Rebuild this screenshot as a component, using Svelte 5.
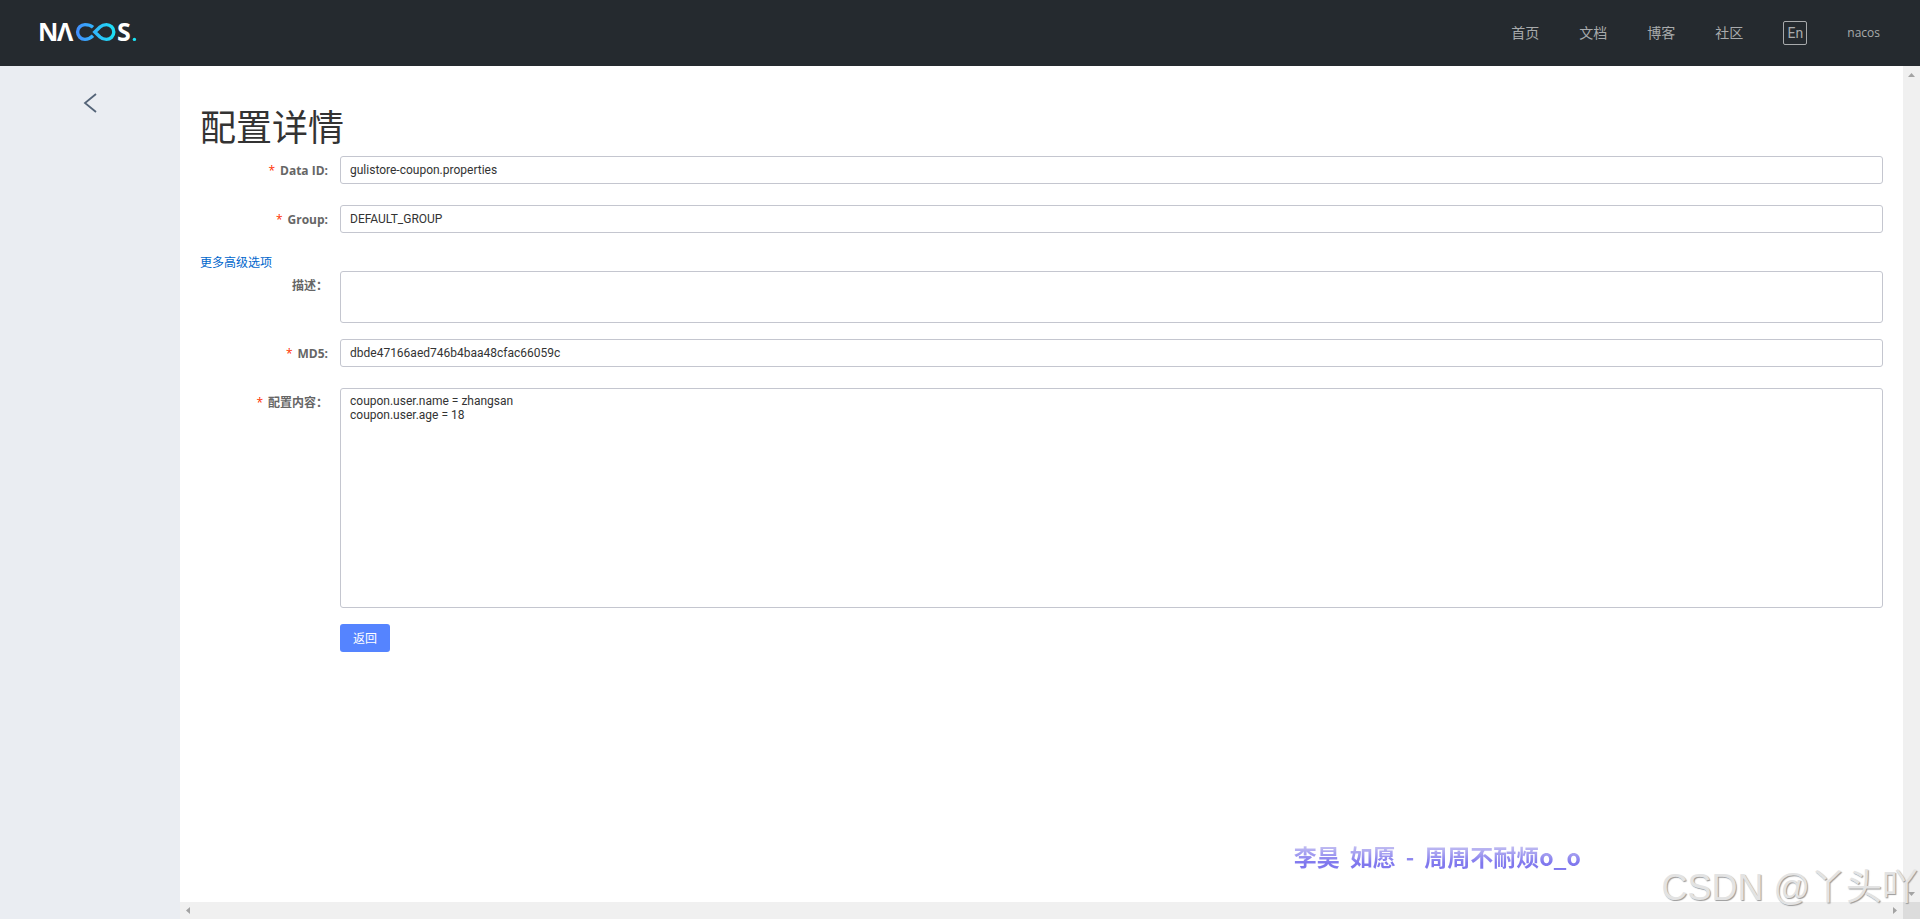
<script lang="ts">
	type Field = {
		id: string;
		label: string;
		value: string;
		required: boolean;
	};

	const links = ['首页', '文档', '博客', '社区'];

	let dataId: Field = {
		id: 'dataId',
		label: 'Data ID:',
		value: 'gulistore-coupon.properties',
		required: true
	};
	let group: Field = { id: 'group', label: 'Group:', value: 'DEFAULT_GROUP', required: true };
	let md5: Field = {
		id: 'md5',
		label: 'MD5:',
		value: 'dbde47166aed746b4baa48cfac66059c',
		required: true
	};
	let description = '';
	let content = 'coupon.user.name = zhangsan\ncoupon.user.age = 18';
	const lyric = ['李昊', '如愿', '-', '周周不耐烦o_o'];
</script>

<div class="page">
	<header>
		<a class="logo" href="#home" aria-label="Nacos">
			<svg width="104" height="40" viewBox="-4 -9 104 40">
				<defs>
					<linearGradient id="loop" gradientUnits="userSpaceOnUse" x1="36" y1="0" x2="76" y2="0">
						<stop offset="0" stop-color="#438eff" />
						<stop offset="1" stop-color="#1be3f5" />
					</linearGradient>
				</defs>
				<text x="-2" y="19">N</text>
				<text x="17" y="19">Λ</text>
				<g fill="none" stroke="url(#loop)" stroke-width="3.4">
					<path d="M53 5.2C50 2.6 47.5 2.6 45 2.6A7.4 7.4 0 0 0 45 17.4C48.5 17.4 50.5 16.2 53 13.8" />
					<path d="M54.8 10L60 5C62 3.2 64 2.6 66.4 2.6A7.4 7.4 0 0 1 66.4 17.4C64 17.4 62 16.8 60 15Z" />
				</g>
				<text x="77" y="19">S</text>
				<circle cx="94.4" cy="17.4" r="1.7" fill="#1be3f5" />
			</svg>
		</a>
		<nav>
			{#each links as link}
				<a href="#{link}">{link}</a>
			{/each}
			<button class="lang" type="button">En</button>
			<a class="user" href="#user">nacos</a>
		</nav>
	</header>

	<div class="body">
		<aside>
			<button class="back" type="button" aria-label="Back">
				<svg width="14" height="20" viewBox="0 0 14 20">
					<path d="M13 1L2 10L13 19" fill="none" stroke="#546478" stroke-width="1.8" />
				</svg>
			</button>
		</aside>

		<div class="viewport">
			<main>
				<h1>配置详情</h1>
				<form on:submit|preventDefault>
					{#each [dataId, group] as field}
						<div class="row">
							<label for={field.id} class:required={field.required}>{field.label}</label>
							<input type="text" id={field.id} value={field.value} readonly />
						</div>
					{/each}

					<a class="more" href="#more">更多高级选项</a>

					<div class="row area">
						<label for="description">描述：</label>
						<textarea id="description" bind:value={description} readonly></textarea>
					</div>

					<div class="row">
						<label for={md5.id} class:required={md5.required}>{md5.label}</label>
						<input type="text" id={md5.id} value={md5.value} readonly />
					</div>

					<div class="row area">
						<label for="content" class="required">配置内容：</label>
						<textarea id="content" class="content" bind:value={content} readonly></textarea>
					</div>

					<button class="primary" type="submit">返回</button>
				</form>
			</main>
			<div class="bar vertical">
				<svg width="17" height="17"><path d="M5 11L8.5 7L12 11Z" /></svg>
				<svg width="17" height="17"><path d="M5 7L8.5 11L12 7Z" /></svg>
			</div>
			<div class="bar">
				<svg width="17" height="17"><path d="M10 5L6 8.5L10 12Z" /></svg>
				<svg width="17" height="17"><path d="M7 5L11 8.5L7 12Z" /></svg>
			</div>
			<div class="corner"></div>
		</div>
	</div>

	<div class="lyric">
		{#each lyric as part}
			<span>{part}</span>
		{/each}
	</div>
	<div class="watermark">CSDN @丫头吖</div>
</div>

<style>
	:global(body) {
		font-family: 'Open Sans', 'Noto Sans CJK SC', sans-serif;
		font-size: 12px;
		color: #333;
	}

	.page {
		position: relative;
		display: flex;
		flex-direction: column;
		height: 100vh;
		overflow: hidden;
	}

	a {
		text-decoration: none;
	}

	button,
	input,
	textarea {
		box-sizing: border-box;
		font-family: inherit;
		font-size: 12px;
	}

	header {
		display: flex;
		align-items: center;
		justify-content: space-between;
		flex: none;
		height: 66px;
		padding: 0 40px 0 36px;
		box-sizing: border-box;
		background: #252a2f;
	}

	.logo svg {
		display: block;
	}

	.logo text {
		font-family: 'Open Sans', sans-serif;
		font-size: 25px;
		font-weight: 700;
		fill: #fff;
	}

	nav {
		display: flex;
		align-items: center;
		gap: 40px;
	}

	nav a {
		font-size: 14px;
		line-height: 18px;
		color: #a8aaac;
	}

	nav .user {
		font-size: 12px;
		font-weight: 500;
	}

	.lang {
		width: 24px;
		height: 24px;
		padding: 0;
		border: 1px solid #a8aaac;
		border-radius: 2px;
		background: none;
		color: #a8aaac;
		font-family: 'Roboto', sans-serif;
		font-size: 14px;
		line-height: 20px;
	}

	.body {
		display: flex;
		flex: 1;
		min-height: 0;
	}

	aside {
		flex: none;
		width: 180px;
		padding-top: 27px;
		box-sizing: border-box;
		background: #eaedf2;
		text-align: center;
	}

	.back {
		padding: 0;
		border: none;
		background: none;
	}

	.viewport {
		display: grid;
		flex: 1;
		min-width: 0;
		grid-template-columns: 1fr 17px;
		grid-template-rows: 1fr 17px;
	}

	main {
		min-width: 0;
		padding: 40px 20px 0;
		background: #fff;
	}

	h1 {
		margin: 0 0 6px;
		font-size: 36px;
		font-weight: 400;
		line-height: 44px;
	}

	.row {
		display: flex;
		align-items: flex-start;
		margin-bottom: 19px;
	}

	.row.area {
		margin-bottom: 16px;
	}

	label {
		flex: none;
		width: 140px;
		padding-right: 12px;
		box-sizing: border-box;
		color: #666;
		font-weight: 700;
		line-height: 30px;
		text-align: right;
	}

	.required::before {
		content: '*';
		margin-right: 5px;
		color: #ff3000;
		font-weight: 400;
	}

	input,
	textarea {
		flex: 1;
		min-width: 0;
		border: 1px solid #c4c6cf;
		border-radius: 3px;
		background: #fff;
		color: #333;
		font-family: 'Roboto', 'Noto Sans CJK SC', sans-serif;
		outline: none;
	}

	input {
		height: 28px;
		padding: 0 9px;
	}

	textarea {
		height: 52px;
		padding: 5px 9px;
		line-height: 14px;
		resize: none;
	}

	.content {
		height: 220px;
	}

	.more {
		display: block;
		line-height: 17px;
		color: #06c;
	}

	.primary {
		height: 28px;
		margin-left: 140px;
		padding: 0 13px;
		border: none;
		border-radius: 3px;
		background: #5584ff;
		color: #fff;
	}

	.bar {
		display: flex;
		justify-content: space-between;
		background: #f0f0f0;
	}

	.bar.vertical {
		flex-direction: column;
	}

	.bar path {
		fill: #a3a3a3;
	}

	.corner {
		background: #dcdcdc;
	}

	.lyric {
		position: absolute;
		right: 339px;
		bottom: 46px;
		display: flex;
		gap: 10px;
		font-family: 'Noto Sans CJK SC', sans-serif;
		font-size: 23px;
		font-weight: 700;
		line-height: 34px;
		color: transparent;
		background: linear-gradient(#c4c0f2 20%, #8078ee 70%);
		background-clip: text;
	}

	.watermark {
		position: absolute;
		right: 2px;
		bottom: 8px;
		font-family: 'Liberation Sans', 'Noto Sans CJK SC', sans-serif;
		font-size: 36px;
		line-height: 46px;
		color: #e3e3e3;
		text-shadow: 1px 1px 1px #999;
	}
</style>
